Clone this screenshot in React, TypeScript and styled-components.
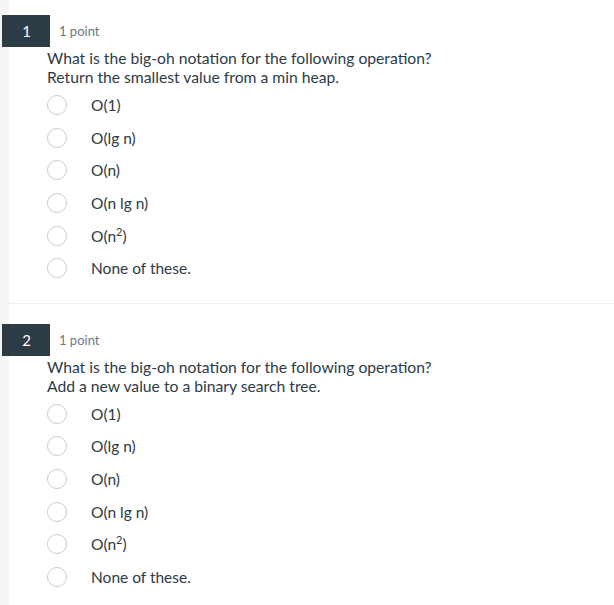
import React from "react";
import styled, { createGlobalStyle } from "styled-components";

const Global = createGlobalStyle`
  html, body { margin: 0; padding: 0; background: #ffffff; }
  body { font-family: Lato, "Open Sans", sans-serif; color: #2d3b45; }
`;

const Page = styled.div`
  display: flex;
  min-height: 605px;
  background: #f5f5f5;
  padding-left: 9px;
  box-sizing: border-box;
`;

const Sheet = styled.div`
  flex: 1;
  background: #ffffff;
  padding-top: 15px;
`;

const Question = styled.section<{ $divider?: boolean }>`
  padding-bottom: 18px;
  margin-bottom: 20px;
  border-bottom: ${(p) => (p.$divider ? "1px solid #eeeeee" : "none")};
`;

const Header = styled.div`
  display: flex;
  align-items: center;
  gap: 9px;
  margin-left: -7px;
`;

const Badge = styled.div`
  width: 48px;
  height: 32px;
  background: #2d3b45;
  color: #ffffff;
  display: flex;
  align-items: center;
  justify-content: center;
  font-size: 15px;
  padding-left: 1px;
  box-sizing: border-box;
`;

const Points = styled.span`
  font-size: 13px;
  color: #6b7780;
`;

const Prompt = styled.div`
  margin-left: 38px;
  font-size: 15.7px;
  line-height: 19px;
  color: #2d3b45;
  padding-top: 2px;
`;

const Options = styled.div`
  display: flex;
  flex-direction: column;
  margin-left: 38px;
  padding-top: 2px;
`;

const Option = styled.label`
  display: flex;
  align-items: center;
  height: 32.6px;
  font-size: 15.5px;
  color: #2d3b45;
`;

const Radio = styled.span`
  width: 18px;
  height: 18px;
  border: 1px solid #c7cdd1;
  border-radius: 50%;
  background: #ffffff;
  margin-right: 24px;
  flex-shrink: 0;
`;

const Sup = styled.sup`
  font-size: 11px;
  line-height: 0;
`;

type Q = { n: number; text: string[] };

const questions: Q[] = [
  {
    n: 1,
    text: [
      "What is the big-oh notation for the following operation?",
      "Return the smallest value from a min heap.",
    ],
  },
  {
    n: 2,
    text: [
      "What is the big-oh notation for the following operation?",
      "Add a new value to a binary search tree.",
    ],
  },
];

const answers: React.ReactNode[] = [
  "O(1)",
  "O(lg n)",
  "O(n)",
  "O(n lg n)",
  <>
    O(n<Sup>2</Sup>)
  </>,
  "None of these.",
];

export default function App() {
  return (
    <>
      <Global />
      <Page>
        <Sheet>
          {questions.map((q, i) => (
            <Question key={q.n} $divider={i < questions.length - 1}>
              <Header>
                <Badge>{q.n}</Badge>
                <Points>1 point</Points>
              </Header>
              <Prompt>
                {q.text.map((t) => (
                  <div key={t}>{t}</div>
                ))}
              </Prompt>
              <Options>
                {answers.map((a, j) => (
                  <Option key={j}>
                    <Radio />
                    <span>{a}</span>
                  </Option>
                ))}
              </Options>
            </Question>
          ))}
        </Sheet>
      </Page>
    </>
  );
}
